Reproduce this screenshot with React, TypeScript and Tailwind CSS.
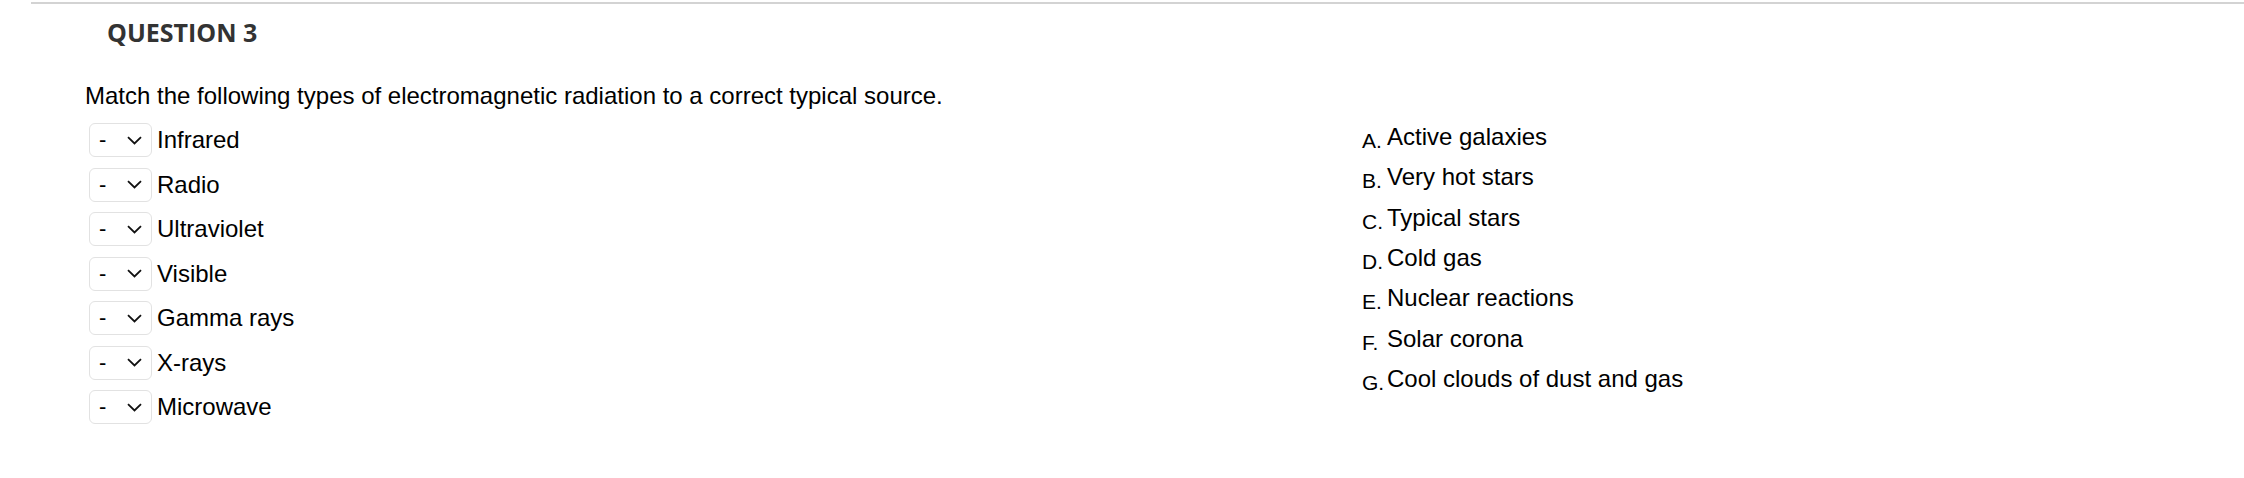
const sources = ["Infrared", "Radio", "Ultraviolet", "Visible", "Gamma rays", "X-rays", "Microwave"];

const answers = [
  ["A.", "Active galaxies"],
  ["B.", "Very hot stars"],
  ["C.", "Typical stars"],
  ["D.", "Cold gas"],
  ["E.", "Nuclear reactions"],
  ["F.", "Solar corona"],
  ["G.", "Cool clouds of dust and gas"],
];

function Picker() {
  return (
    <div className="w-[63px] h-[34px] shrink-0 flex items-center justify-between pl-[9px] pr-[9px] border border-[#e2e2e2] rounded-[6px] bg-white">
      <span className="text-[22px] leading-none text-black">-</span>
      <svg width="15" height="9" viewBox="0 0 15 9" fill="none">
        <path d="M1 1.2 L7.5 7.5 L14 1.2" stroke="#111" strokeWidth="1.8" />
      </svg>
    </div>
  );
}

export default function App() {
  return (
    <div className="w-[2244px] h-[478px] bg-white font-['Liberation_Sans',Arial,sans-serif] text-black overflow-hidden">
      <div className="ml-[31px] pt-[2px]">
        <div className="h-[2px] bg-[#d3d3d3]" />
      </div>

      {/* header */}
      <div className="pl-[107px] pt-[10px] font-['Open_Sans',sans-serif] font-bold text-[25px] leading-[36px] text-[#333]">
        QUESTION 3
      </div>

      {/* prompt */}
      <p className="pl-[85px] pt-[32px] text-[24px] leading-[28px]">
        Match the following types of electromagnetic radiation to a correct typical source.
      </p>

      <div className="flex pt-[13px]">
        {/* left column */}
        <div className="w-[1362px] pl-[89px] flex flex-col gap-[10.5px]">
          {sources.map((s) => (
            <div key={s} className="flex items-center gap-[5px]">
              <Picker />
              <span className="text-[24px] leading-[28px]">{s}</span>
            </div>
          ))}
        </div>

        {/* right column */}
        <div className="flex flex-col -mt-[6px]">
          {answers.map(([k, v]) => (
            <div key={k} className="flex items-baseline h-[40.33px] leading-[40px]">
              <span className="w-[25px] text-[21px] relative top-[3px]">{k}</span>
              <span className="text-[24px]">{v}</span>
            </div>
          ))}
        </div>
      </div>
    </div>
  );
}
